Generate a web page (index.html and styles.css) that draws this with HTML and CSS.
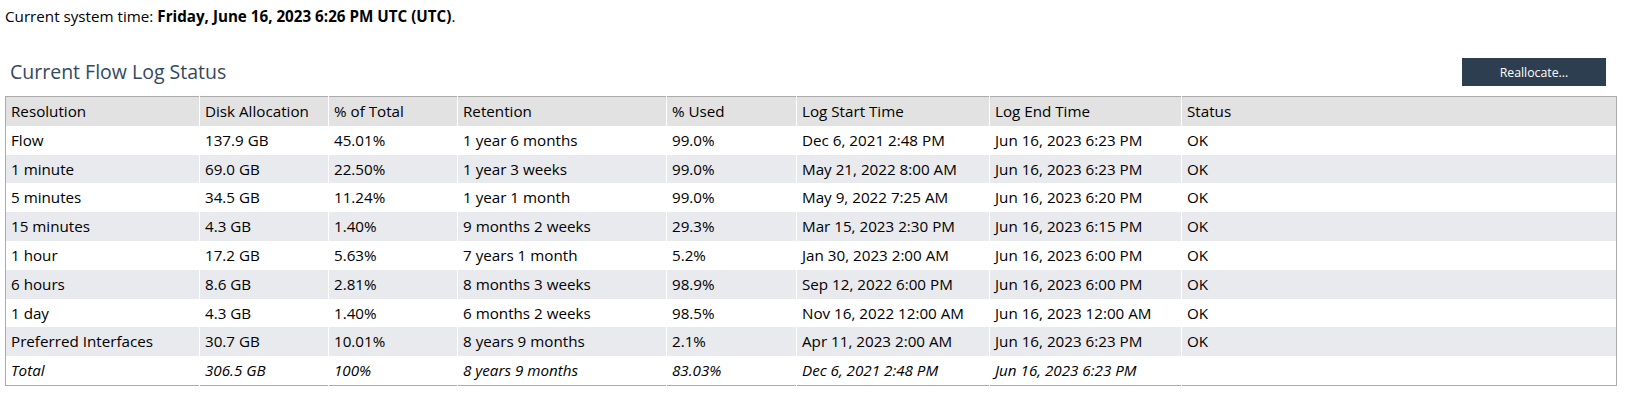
FILE: index.html
```html
<!DOCTYPE html>
<html>
<head>
<meta charset="utf-8">
<link rel="stylesheet" href="styles.css">
</head>
<body>
<div class="page">
  <p class="systime">Current system time: <b>Friday, June 16, 2023 6:26 PM UTC (UTC)</b>.</p>
  <div class="section-head">
    <h2 class="title">Current Flow Log Status</h2>
    <button class="btn">Reallocate...</button>
  </div>
  <table class="status">
    <colgroup>
      <col class="c1"><col class="c2"><col class="c3"><col class="c4"><col class="c5"><col class="c6"><col class="c7"><col class="c8">
    </colgroup>
    <thead>
      <tr><th>Resolution</th><th>Disk Allocation</th><th>% of Total</th><th>Retention</th><th>% Used</th><th>Log Start Time</th><th>Log End Time</th><th>Status</th></tr>
    </thead>
    <tbody>
      <tr><td>Flow</td><td>137.9 GB</td><td>45.01%</td><td>1 year 6 months</td><td>99.0%</td><td>Dec 6, 2021 2:48 PM</td><td>Jun 16, 2023 6:23 PM</td><td>OK</td></tr>
      <tr><td>1 minute</td><td>69.0 GB</td><td>22.50%</td><td>1 year 3 weeks</td><td>99.0%</td><td>May 21, 2022 8:00 AM</td><td>Jun 16, 2023 6:23 PM</td><td>OK</td></tr>
      <tr><td>5 minutes</td><td>34.5 GB</td><td>11.24%</td><td>1 year 1 month</td><td>99.0%</td><td>May 9, 2022 7:25 AM</td><td>Jun 16, 2023 6:20 PM</td><td>OK</td></tr>
      <tr><td>15 minutes</td><td>4.3 GB</td><td>1.40%</td><td>9 months 2 weeks</td><td>29.3%</td><td>Mar 15, 2023 2:30 PM</td><td>Jun 16, 2023 6:15 PM</td><td>OK</td></tr>
      <tr><td>1 hour</td><td>17.2 GB</td><td>5.63%</td><td>7 years 1 month</td><td>5.2%</td><td>Jan 30, 2023 2:00 AM</td><td>Jun 16, 2023 6:00 PM</td><td>OK</td></tr>
      <tr><td>6 hours</td><td>8.6 GB</td><td>2.81%</td><td>8 months 3 weeks</td><td>98.9%</td><td>Sep 12, 2022 6:00 PM</td><td>Jun 16, 2023 6:00 PM</td><td>OK</td></tr>
      <tr><td>1 day</td><td>4.3 GB</td><td>1.40%</td><td>6 months 2 weeks</td><td>98.5%</td><td>Nov 16, 2022 12:00 AM</td><td>Jun 16, 2023 12:00 AM</td><td>OK</td></tr>
      <tr><td>Preferred Interfaces</td><td>30.7 GB</td><td>10.01%</td><td>8 years 9 months</td><td>2.1%</td><td>Apr 11, 2023 2:00 AM</td><td>Jun 16, 2023 6:23 PM</td><td>OK</td></tr>
      <tr class="total"><td>Total</td><td>306.5 GB</td><td>100%</td><td>8 years 9 months</td><td>83.03%</td><td>Dec 6, 2021 2:48 PM</td><td>Jun 16, 2023 6:23 PM</td><td></td></tr>
    </tbody>
  </table>
</div>
</body>
</html>
```

FILE: styles.css
```css
html, body {
  margin: 0;
  padding: 0;
  background: #fff;
}
body {
  font-family: "Open Sans", "Liberation Sans", sans-serif;
  font-size: 15.2px;
  color: #000;
}
.page {
  padding: 6px 0 0 5px;
  width: 1612px;
}
.systime {
  margin: 0;
  line-height: 20px;
}
.section-head {
  display: flex;
  justify-content: space-between;
  align-items: flex-start;
  margin-top: 32px;
  margin-bottom: 10px;
}
.title {
  margin: 0;
  padding-left: 5px;
  font-size: 19.5px;
  font-weight: normal;
  line-height: 27px;
  color: #34495e;
}
.btn {
  width: 144px;
  height: 28px;
  margin-right: 11px;
  border: none;
  border-radius: 0;
  background: #2c3e50;
  color: #fff;
  font-family: "Open Sans", "Liberation Sans", sans-serif;
  font-size: 12.3px;
  padding: 0;
}
.status {
  width: 1612px;
  table-layout: fixed;
  border-collapse: collapse;
  border: 1px solid #ababab;
}
.c1 { width: 194px; }
.c2 { width: 129px; }
.c3 { width: 129px; }
.c4 { width: 209px; }
.c5 { width: 130px; }
.c6 { width: 193px; }
.c7 { width: 192px; }
.status th, .status td {
  text-align: left;
  font-weight: normal;
  padding: 4px 5px;
  line-height: 20.8px;
  border-left: 1px solid #fff;
  white-space: nowrap;
}
.status th:first-child, .status td:first-child {
  border-left: none;
}
.status thead tr {
  background: #e2e2e2;
}
.status tbody tr:nth-child(even) {
  background: #e9eaee;
}
.status .total td {
  font-style: italic;
}
```
